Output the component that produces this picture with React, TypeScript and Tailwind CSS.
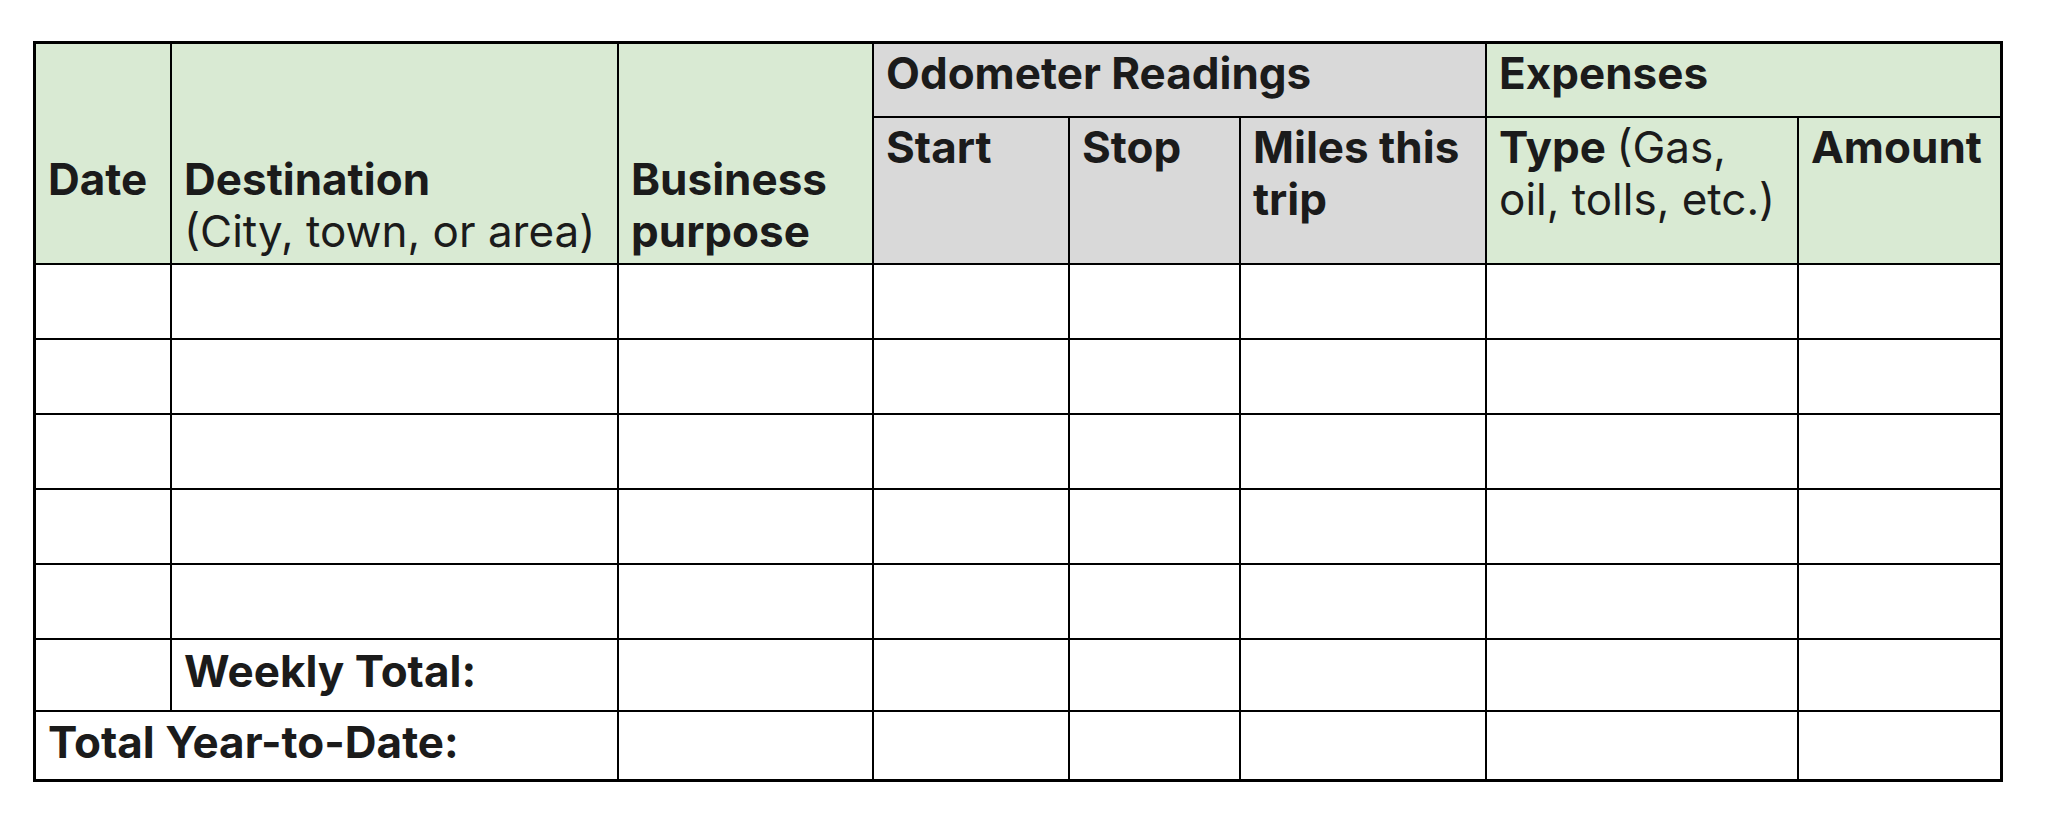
import React from 'react';

const font = { fontFamily: 'Inter, "Noto Sans", sans-serif' };

const Head: React.FC<{ className?: string; children?: React.ReactNode }> = ({ className = '', children }) => (
  <div className={`px-3 text-[44px] leading-[52px] font-bold text-[#1b1b1b] ${className}`}>{children}</div>
);

const Blank: React.FC = () => <div className="bg-white" />;

const App: React.FC = () => {
  const rows = [0, 1, 2, 3, 4];

  return (
    <div className="w-[2048px] h-[823px] bg-white pt-[41px] pl-[33px]" style={font}>
      <div className="grid w-fit grid-cols-[134px_445px_253px_194px_169px_244px_310px_201px] grid-rows-[72px_145px_repeat(5,73px)_70px_67px] gap-[2px] bg-black border-[3px] border-black">
        {/* header, first row */}
        <Head className="row-span-2 bg-[#d9ead3] pt-[109px]">Date</Head>
        <Head className="row-span-2 bg-[#d9ead3] pt-[109px]">
          Destination
          <span className="block font-normal">(City, town, or area)</span>
        </Head>
        <Head className="row-span-2 bg-[#d9ead3] pt-[109px]">Business purpose</Head>
        <Head className="col-span-3 bg-[#d9d9d9] pt-[3px]">Odometer Readings</Head>
        <Head className="col-span-2 bg-[#d9ead3] pt-[3px]">Expenses</Head>

        {/* header, second row */}
        <Head className="bg-[#d9d9d9] pt-[3px]">Start</Head>
        <Head className="bg-[#d9d9d9] pt-[3px]">Stop</Head>
        <Head className="bg-[#d9d9d9] pt-[3px]">Miles this trip</Head>
        <Head className="bg-[#d9ead3] pt-[3px]">
          Type <span className="font-normal">(Gas, oil, tolls, etc.)</span>
        </Head>
        <Head className="bg-[#d9ead3] pt-[3px]">Amount</Head>

        {/* empty log rows */}
        {rows.map((r) => (
          <React.Fragment key={r}>
            {Array.from({ length: 8 }).map((_, i) => (
              <Blank key={i} />
            ))}
          </React.Fragment>
        ))}

        {/* weekly total */}
        <Blank />
        <Head className="bg-white flex items-center pb-[8px]">Weekly Total:</Head>
        {Array.from({ length: 6 }).map((_, i) => (
          <Blank key={i} />
        ))}

        {/* year to date */}
        <Head className="col-span-2 bg-white flex items-center pb-[8px]">Total Year-to-Date:</Head>
        {Array.from({ length: 6 }).map((_, i) => (
          <Blank key={i} />
        ))}
      </div>
    </div>
  );
};

export default App;
